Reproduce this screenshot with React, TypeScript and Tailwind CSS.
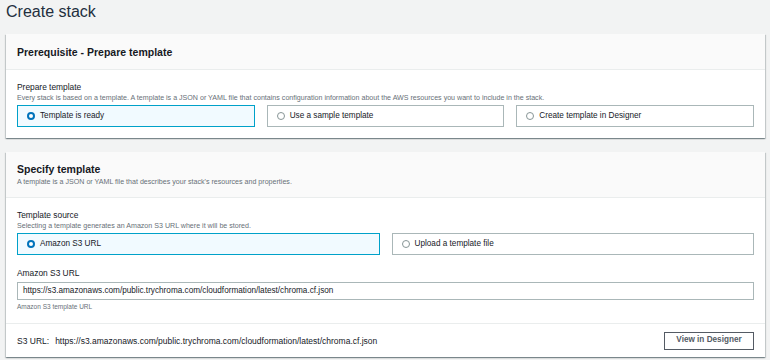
import React from "react";

type Option = { label: string; selected?: boolean };

function Radio({ selected }: { selected?: boolean }) {
  return selected ? (
    <span className="w-[8px] h-[8px] rounded-full border-[2.5px] border-[#0073bb] bg-white shrink-0" />
  ) : (
    <span className="w-[8px] h-[8px] rounded-full border border-[#879596] bg-white shrink-0" />
  );
}

function Tile({ label, selected }: Option) {
  return (
    <div
      className={`h-[22px] flex items-center gap-[5px] pl-[9px] border ${
        selected ? "border-[#00a1c9] bg-[#f1faff]" : "border-[#aab7b8] bg-white"
      }`}
    >
      <Radio selected={selected} />
      <span className="text-[8.2px] leading-[10px]">{label}</span>
    </div>
  );
}

const cardShadow =
  "shadow-[0_1px_1px_0_rgba(0,28,36,0.3),1px_1px_1px_0_rgba(0,28,36,0.15),-1px_1px_1px_0_rgba(0,28,36,0.15)]";

const s3Url = "https://s3.amazonaws.com/public.trychroma.com/cloudformation/latest/chroma.cf.json";

export default function App() {
  const prepare: Option[] = [
    { label: "Template is ready", selected: true },
    { label: "Use a sample template" },
    { label: "Create template in Designer" },
  ];
  const source: Option[] = [
    { label: "Amazon S3 URL", selected: true },
    { label: "Upload a template file" },
  ];

  return (
    <div className="w-[770px] h-[360px] overflow-hidden bg-[#f2f3f3] text-[#16191f] font-['Liberation_Sans',Arial,sans-serif]">
      <div className="pl-[6px] pr-[5px]">
        <h1 className="h-[34px] pt-[1px] text-[16px] leading-[22px] font-normal text-[#232f3e]">Create stack</h1>

        {/* Prerequisite */}
        <section className={`bg-white ${cardShadow}`}>
          <div className="h-[36px] flex items-center px-[11px] bg-[#fafafa] border-b border-[#eaeded]">
            <h2 className="text-[10.5px] font-bold leading-[14px]">Prerequisite - Prepare template</h2>
          </div>
          <div className="px-[11px] pt-[11px] pb-[11px]">
            <div className="text-[8.4px] leading-[12px]">Prepare template</div>
            <div className="text-[7.1px] leading-[10px] text-[#687078]">
              Every stack is based on a template. A template is a JSON or YAML file that contains configuration
              information about the AWS resources you want to include in the stack.
            </div>
            <div className="mt-[2px] grid grid-cols-3 gap-[12px]">
              {prepare.map((o) => (
                <Tile key={o.label} {...o} />
              ))}
            </div>
          </div>
        </section>

        {/* Specify template */}
        <section className={`mt-[14px] bg-white ${cardShadow}`}>
          <div className="px-[11px] pt-[10px] pb-[10px] bg-[#fafafa] border-b border-[#eaeded]">
            <h2 className="text-[10.5px] font-bold leading-[14px]">Specify template</h2>
            <div className="mt-[1px] text-[7.1px] leading-[10px] text-[#687078]">
              A template is a JSON or YAML file that describes your stack's resources and properties.
            </div>
          </div>
          <div className="px-[11px] pt-[11px] pb-[11px] border-b border-[#eaeded]">
            <div className="text-[8.4px] leading-[12px]">Template source</div>
            <div className="text-[7.1px] leading-[10px] text-[#687078]">
              Selecting a template generates an Amazon S3 URL where it will be stored.
            </div>
            <div className="mt-[2px] grid grid-cols-2 gap-[12px]">
              {source.map((o) => (
                <Tile key={o.label} {...o} />
              ))}
            </div>

            <div className="mt-[12px] text-[8.4px] leading-[12px]">Amazon S3 URL</div>
            <div className="mt-[3px] h-[18px] flex items-center px-[5px] border border-[#aab7b8] bg-white">
              <span className="text-[8.2px] leading-[10px]">{s3Url}</span>
            </div>
            <div className="mt-[2px] text-[6.5px] leading-[10px] text-[#687078]">Amazon S3 template URL</div>
          </div>
          <div className="h-[33px] flex items-center justify-between px-[11px]">
            <div className="text-[8.5px] leading-[10px]">
              <span className="mr-[6px]">S3 URL:</span>
              {s3Url}
            </div>
            <button className="h-[18px] w-[90px] border border-[#545b64] bg-white text-[8.2px] font-bold text-[#545b64]">
              View in Designer
            </button>
          </div>
        </section>
      </div>
    </div>
  );
}
